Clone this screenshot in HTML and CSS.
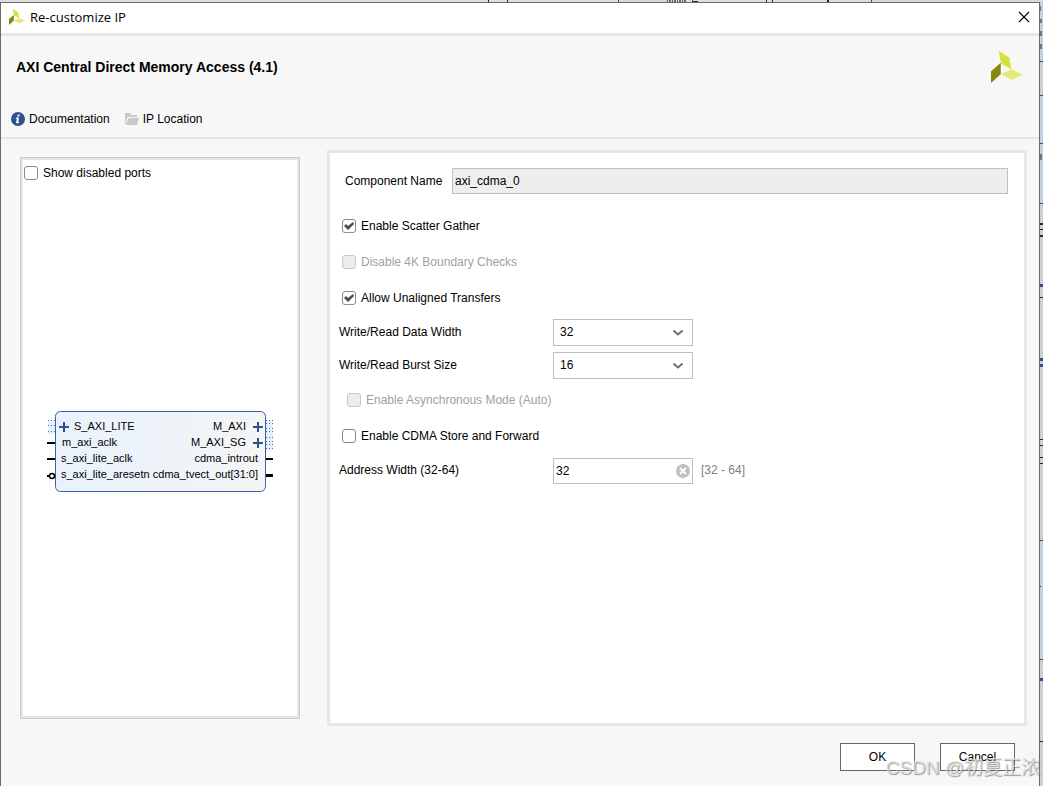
FILE: index.html
```
<!DOCTYPE html>
<html lang="en">
<head>
    <meta charset="UTF-8">
    <meta name="viewport" content="width=device-width, initial-scale=1.0">
    <title>Re-customize IP</title>
    <link rel="stylesheet" href="styles.css">
</head>

<body>
    <!-- shared drawings -->
    <svg class="defs" aria-hidden="true">
        <symbol id="logo" viewBox="0 0 95 95">
            <path fill="#d5e13c" d="M23 0L54 19L61 55L30 37Z"/>
            <path fill="#858a0b" d="M0 60L29 35V69L0 95Z"/>
            <path fill="#e3eb7c" d="M29 69L61 54L95 70L63 86Z"/>
        </symbol>
        <symbol id="arrow" viewBox="0 0 10 6">
            <path fill="none" stroke="#6e6e6e" stroke-width="2" d="M.5 .5L5 4.500L9.500 .5"/>
        </symbol>
    </svg>

    <div class="desktop">
        <!-- what shows of the block design behind the dialog -->
        <svg class="top-edge" height="2" aria-hidden="true">
            <rect width="100%" height="2" fill="#dedede"/>
            <path fill="#cfd9e1" d="M619 0h48v2h-48zM872 0h171v2h-171z"/>
            <path fill="#1b2a3c" d="M488 0h1v2h-1zM507 0h1v2h-1zM766 0h1v2h-1zM772 0h1v2h-1zM827 0h2v2h-2zM693 1h5v1h-5z"/>
            <path fill="#2f4f8f" d="M618 0h1v2h-1zM692 0h1v2h-1zM871 0h1v2h-1z"/>
            <path stroke="#666" stroke-width="2" stroke-dasharray="1 1 2 1" d="M667 1h20"/>
        </svg>

        <div class="dialog">
            <div class="titlebar">
                <svg class="logo-small"><use href="#logo"/></svg>
                <span>Re-customize IP</span>
                <button class="close" aria-label="Close">
                    <svg width="12" height="12" viewBox="0 0 12 12"><path fill="none" stroke="#000" stroke-width="1.1" d="M1 1L11 11M11 1L1 11"/></svg>
                </button>
            </div>

            <header>
                <div class="heading">
                    <h1>AXI Central Direct Memory Access (4.1)</h1>
                    <svg class="logo"><use href="#logo"/></svg>
                </div>
                <nav>
                    <a href="#">
                        <svg width="14" height="14" viewBox="0 0 14 14">
                            <circle cx="7" cy="7" r="7" fill="#30508c"/>
                            <path fill="#fff" d="M6.7 2.5h2l-.4 1.9h-2zM5 5.4h3l-.9 4.2h1.2l-.5 1.6H4.9l1-4.4H4.7z"/>
                        </svg>
                        Documentation
                    </a>
                    <a href="#">
                        <svg width="14" height="12" viewBox="0 0 14 12">
                            <path fill="#c8c8c8" d="M0 0H5L6 2H12V4H2.500L1 9V11H0Z"/>
                            <path fill="#c8c8c8" d="M3.500 5H14L12 12H1Z"/>
                        </svg>
                        IP Location
                    </a>
                </nav>
            </header>

            <main>
                <section class="preview">
                    <label class="check"><input type="checkbox">Show disabled ports</label>
                    <div class="canvas">
                        <svg class="block" width="228" height="81" viewBox="0 0 228 81">
                            <defs>
                                <linearGradient id="fill">
                                    <stop offset="0" stop-color="#e9f2fd"/>
                                    <stop offset="1" stop-color="#f4f5f6"/>
                                </linearGradient>
                            </defs>
                            <!-- bus stubs -->
                            <path fill="#e4f1fc" d="M1 9h7v14H1zM219 9h7v30h-7z"/>
                            <path stroke="#3f78b5" stroke-dasharray="1 2" d="M1 9.500h7M1 14.500h7M1 20.500h7M219 9.500h7M219 12.500h7M219 17.500h7M219 20.500h7M219 26.500h7M219 30.500h7M219 33.500h7M219 37.500h7"/>
                            <rect x="8.500" y=".5" width="210" height="80" rx="5" fill="url(#fill)" stroke="#3a61a3"/>
                            <path stroke="#000" stroke-width="2" d="M0 32h8M0 48h8M219 48h7"/>
                            <path stroke="#000" stroke-width="3" d="M219 64.500h7"/>
                            <path stroke="#000" stroke-width="2" d="M0 65h3"/>
                            <circle cx="5" cy="65" r="2.500" fill="#fff" stroke="#000" stroke-width="1.500"/>
                            <path stroke="#30508c" stroke-width="2" d="M12 16h10M17 11v10M206 16h10M211 11v10M206 32h10M211 27v10"/>
                            <text x="27" y="19">S_AXI_LITE</text>
                            <text x="15" y="35">m_axi_aclk</text>
                            <text x="14" y="51">s_axi_lite_aclk</text>
                            <text x="14" y="67">s_axi_lite_aresetn</text>
                            <g text-anchor="end">
                                <text x="199" y="19">M_AXI</text>
                                <text x="199" y="35">M_AXI_SG</text>
                                <text x="211" y="51">cdma_introut</text>
                                <text x="211" y="67">cdma_tvect_out[31:0]</text>
                            </g>
                        </svg>
                    </div>
                </section>

                <form class="settings">
                    <div class="name-row">
                        <label for="compname">Component Name</label>
                        <input type="text" id="compname" value="axi_cdma_0" readonly>
                    </div>
                    <label class="check"><input type="checkbox" checked>Enable Scatter Gather</label>
                    <label class="check off"><input type="checkbox" disabled>Disable 4K Boundary Checks</label>
                    <label class="check"><input type="checkbox" checked>Allow Unaligned Transfers</label>
                    <div class="field">
                        <label for="datawidth">Write/Read Data Width</label>
                        <div class="box">
                            <select id="datawidth"><option>32</option><option>64</option><option>128</option></select>
                            <svg class="arrow"><use href="#arrow"/></svg>
                        </div>
                    </div>
                    <div class="field">
                        <label for="burst">Write/Read Burst Size</label>
                        <div class="box">
                            <select id="burst"><option>16</option><option>32</option><option>64</option></select>
                            <svg class="arrow"><use href="#arrow"/></svg>
                        </div>
                    </div>
                    <label class="check off indent"><input type="checkbox" disabled>Enable Asynchronous Mode (Auto)</label>
                    <label class="check"><input type="checkbox">Enable CDMA Store and Forward</label>
                    <div class="field">
                        <label for="addrwidth">Address Width (32-64)</label>
                        <div class="box">
                            <input type="text" id="addrwidth" value="32">
                            <button type="button" class="clear" aria-label="Clear">
                                <svg width="14" height="14" viewBox="0 0 14 14">
                                    <circle cx="7" cy="7" r="7" fill="#bfbfbf"/>
                                    <path stroke="#fff" stroke-width="2" d="M4 4L10 10M10 4L4 10"/>
                                </svg>
                            </button>
                        </div>
                        <span class="range">[32 - 64]</span>
                    </div>
                </form>
            </main>

            <footer>
                <button>OK</button>
                <button>Cancel</button>
            </footer>
        </div>

        <svg class="right-edge" width="3" aria-hidden="true">
            <rect width="3" height="100%" fill="#cfcfcf"/>
            <path fill="#c5d1da" d="M0 0h3v59H0zM0 94h3v107H0zM0 539h3v118H0z"/>
            <path fill="#2f4f8f" d="M0 59h3v1H0zM0 93h3v1H0zM0 141h3v1H0zM0 201h3v1H0zM0 282h3v3H0zM0 356h3v3H0zM0 362h3v3H0zM0 538h3v1H0zM0 657h3v1H0zM0 676h3v3H0z"/>
            <path fill="#1b2a3c" d="M0 221h3v2H0zM0 227h3v1H0zM0 233h3v2H0zM0 295h3v1H0zM0 437h3v1H0zM0 443h3v1H0zM0 455h3v1H0zM0 461h3v1H0zM0 584h1v1H0zM0 739h3v1H0z"/>
            <path fill="#6f777d" d="M0 4h1v5H0zM0 17h2v4H0zM0 29h2v5H0zM0 42h2v5H0zM0 152h2v6H0z"/>
        </svg>
    </div>

    <div class="watermark">CSDN @初夏正浓</div>
</body>
</html>
```

FILE: styles.css
```
*{
    box-sizing: border-box;
    margin: 0;
}
body{
    position: relative;
    overflow-x: hidden;
    font-family: "Liberation Sans", Arial, sans-serif;
    font-size: 12px;
    line-height: 16px;
    color: #000;
}
svg{
    display: block;
    flex: none;
}
input, select, button{
    font: inherit;
    color: inherit;
}
.defs{
    position: absolute;
    width: 0;
    height: 0;
}
.desktop{
    display: grid;
    grid-template-columns: 1fr 3px;
    grid-template-rows: 2px 1fr;
    min-height: 100vh;
}
.top-edge{
    grid-column: 1 / 3;
    width: 100%;
}
.right-edge{
    height: 100%;
}
.dialog{
    display: flex;
    flex-direction: column;
    background: #f7f7f7;
    border: 1px solid #6b6b6b;
    border-bottom: none;
}

/* title bar */
.titlebar{
    display: flex;
    align-items: center;
    gap: 5px;
    height: 33px;
    padding: 0 9px 2px 8px;
    background: #fff;
    border-bottom: 3px solid #e6e6e6;
    font-family: "Open Sans", sans-serif;
    font-size: 13px;
}
.logo-small{
    width: 16px;
    height: 16px;
}
.close{
    margin-left: auto;
    padding: 0;
    border: none;
    background: none;
}

/* header */
header{
    padding: 15px 16px 9px 10px;
    border-bottom: 2px solid #e6e6e6;
}
.heading{
    display: flex;
    align-items: center;
    justify-content: space-between;
    padding-left: 5px;
}
h1{
    font-size: 14px;
}
.logo{
    width: 32px;
    height: 32px;
}
nav{
    display: flex;
    gap: 15px;
    margin-top: 27px;
}
nav a{
    display: flex;
    align-items: center;
    gap: 4px;
    height: 18px;
    color: inherit;
    text-decoration: none;
}

/* panels */
main{
    flex: 1;
    display: grid;
    grid-template-columns: 280px 1fr;
    gap: 27px;
    padding: 11px 12px 0 19px;
}
.preview{
    display: flex;
    flex-direction: column;
    margin: 7px 0;
    background: #fff;
    border: 1px solid #ccc;
    box-shadow: inset 0 0 0 2px #e6e6e6;
}
.preview .check{
    height: 30px;
    padding-left: 3px;
}
.canvas{
    flex: 1;
    display: flex;
    align-items: center;
    justify-content: center;
    padding: 0 0 4px 2px;
}
.block text{
    font-size: 11px;
}
.settings{
    padding: 15px 16px 15px 9px;
    background: #fff;
    border: 3px solid #e6e6e6;
}

/* check boxes */
.check{
    display: flex;
    align-items: center;
    gap: 5px;
    height: 36px;
    padding-left: 3px;
}
.check input{
    appearance: none;
    width: 14px;
    height: 14px;
    border: 1px solid #8a8a8a;
    border-radius: 3px;
    background: #fff;
}
.check input:checked::after{
    content: "";
    display: block;
    width: 12px;
    height: 12px;
    background: #4d4d4d;
    clip-path: polygon(1px 6px, 3px 4px, 5px 6px, 10px 2px, 11px 4px, 5px 10px);
}
.check.off{
    color: #a0a0a0;
}
.check.off input{
    border-color: #c8c8c8;
    background: #ececee;
}
.check.indent{
    padding-left: 8px;
}

/* fields */
.name-row{
    display: flex;
    align-items: center;
    margin-bottom: 14px;
    padding-left: 6px;
}
.name-row label{
    width: 107px;
}
.name-row input{
    flex: 1;
    height: 26px;
    padding: 0 2px;
    border: 1px solid #bfbfbf;
    background: #eee;
}
.field{
    display: flex;
    align-items: center;
    height: 33px;
}
.field label{
    width: 214px;
    padding-bottom: 2px;
}
.box{
    position: relative;
    width: 140px;
}
.box select, .box input{
    display: block;
    width: 100%;
    height: 27px;
    border: 1px solid #bfbfbf;
    border-radius: 0;
    background: #fff;
}
.box select{
    appearance: none;
    padding: 0 6px 2px;
}
.box input{
    height: 26px;
    padding: 0 20px 0 2px;
}
.arrow{
    position: absolute;
    top: 11px;
    right: 10px;
    width: 10px;
    height: 6px;
    pointer-events: none;
}
.clear{
    position: absolute;
    top: 6px;
    right: 3px;
    padding: 0;
    border: none;
    background: none;
}
.range{
    margin-left: 8px;
    padding-bottom: 2px;
    color: #808080;
}

/* buttons */
footer{
    display: flex;
    justify-content: flex-end;
    gap: 25px;
    padding: 17px 24px 15px;
}
footer button{
    width: 75px;
    height: 28px;
    border: 1px solid #666;
    background: #fff;
}

.watermark{
    position: absolute;
    right: 3px;
    bottom: 4px;
    font-family: "Liberation Sans", "Noto Sans CJK SC", sans-serif;
    font-size: 19px;
    line-height: 28px;
    color: rgba(225, 225, 225, 0.8);
    text-shadow: 1px 1px 1px rgba(90, 90, 90, 0.6);
    pointer-events: none;
}
```
